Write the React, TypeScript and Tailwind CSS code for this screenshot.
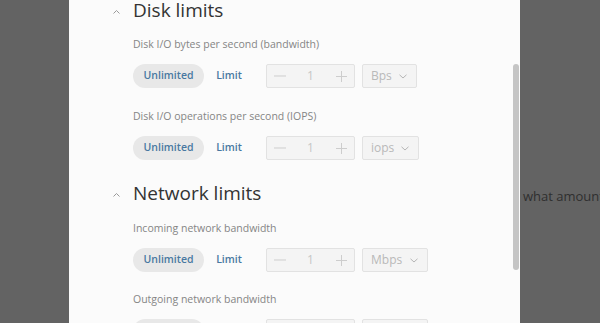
import React from 'react';

const font = { fontFamily: '"Open Sans", "Noto Sans", sans-serif' };

function Chevron() {
  return (
    <svg width="20" height="10" viewBox="0 0 20 10" className="shrink-0">
      <polyline points="0.5,7.5 3.5,4.5 6.5,7.5" fill="none" stroke="#9a9a9a" strokeWidth="1" />
    </svg>
  );
}

function SectionHeader({ title, className }: { title: string; className: string }) {
  return (
    <div className={`flex items-center h-[21px] -ml-[20px] ${className}`}>
      <Chevron />
      <h2 className="text-[19px] leading-[21px] text-[#333333]">{title}</h2>
    </div>
  );
}

function Field({ label, unit, unitWidth, className }: { label: string; unit: string; unitWidth: string; className: string }) {
  return (
    <div className={className}>
      <p className="h-[14px] leading-[14px] text-[10.5px] text-[#858585]">{label}</p>
      <div className="mt-[13px] flex items-center h-[24px]">
        <button className="h-[24px] w-[71px] rounded-full bg-[#e8e8e8] text-[10.5px] font-semibold text-[#4878a1]">
          Unlimited
        </button>
        <button className="h-[24px] w-[46px] ml-[2px] text-[10.5px] font-semibold text-[#4878a1]">Limit</button>
        <div className="ml-[14px] flex items-center w-[89px] h-[24px] border border-[#e2e2e2] rounded-[2px] bg-[#f4f4f4] text-[#c6c6c6]">
          <span className="w-[25px] flex justify-center">
            <svg width="12" height="2" viewBox="0 0 12 2"><line x1="0" y1="1" x2="12" y2="1" stroke="#cdcdcd" strokeWidth="1" /></svg>
          </span>
          <span className="flex-1 text-center text-[12px] leading-[14px]">1</span>
          <span className="w-[25px] flex justify-center">
            <svg width="11" height="11" viewBox="0 0 11 11">
              <line x1="0" y1="5.5" x2="11" y2="5.5" stroke="#cdcdcd" strokeWidth="1" />
              <line x1="5.5" y1="0" x2="5.5" y2="11" stroke="#cdcdcd" strokeWidth="1" />
            </svg>
          </span>
        </div>
        <div
          className={`ml-[7px] flex items-center justify-between h-[24px] pl-[8px] pr-[9px] border border-[#e2e2e2] rounded-[2px] bg-[#f4f4f4] ${unitWidth}`}
        >
          <span className="text-[12px] leading-[14px] text-[#b9b9b9]">{unit}</span>
          <svg width="8" height="5" viewBox="0 0 8 5">
            <polyline points="0.5,0.8 4,4 7.5,0.8" fill="none" stroke="#b5b5b5" strokeWidth="1" />
          </svg>
        </div>
      </div>
    </div>
  );
}

export default function App() {
  return (
    <div className="w-[600px] h-[323px] flex overflow-hidden bg-[#636363]" style={font}>
      <div className="w-[69px] shrink-0" />
      <div className="relative w-[451px] shrink-0 bg-[#fbfbfb] overflow-hidden">
        <div className="pl-[64px]">
          <SectionHeader title="Disk limits" className="" />
          <Field className="mt-[16px]" label="Disk I/O bytes per second (bandwidth)" unit="Bps" unitWidth="w-[55px]" />
          <Field className="mt-[21px]" label="Disk I/O operations per second (IOPS)" unit="iops" unitWidth="w-[57px]" />
          <SectionHeader title="Network limits" className="mt-[23px]" />
          <Field className="mt-[17px]" label="Incoming network bandwidth" unit="Mbps" unitWidth="w-[66px]" />
          <Field className="mt-[20px]" label="Outgoing network bandwidth" unit="Mbps" unitWidth="w-[66px]" />
        </div>
        <div className="absolute left-[444px] top-[64px] w-[6px] h-[206px] rounded-full bg-[#c5c5c5]" />
      </div>
      <div className="flex-1 pt-[187px] pl-[3px] overflow-hidden">
        <p className="text-[13px] leading-[18px] whitespace-nowrap text-[#2f2f2f]">what amount of resources</p>
      </div>
    </div>
  );
}
